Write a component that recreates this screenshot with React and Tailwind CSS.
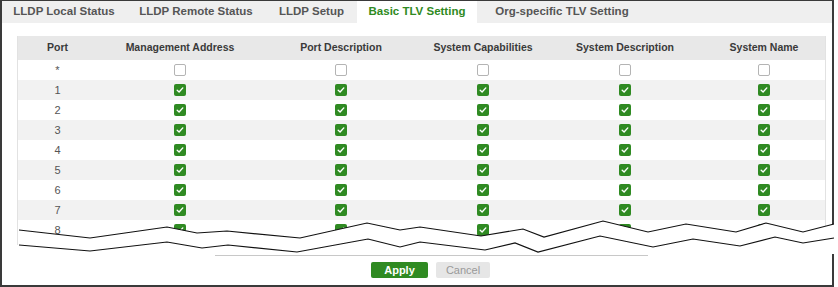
const tabs = [
  { label: "LLDP Local Status", w: "w-[124px]" },
  { label: "LLDP Remote Status", w: "w-[140px]" },
  { label: "LLDP Setup", w: "w-[91px]" },
  { label: "Basic TLV Setting", w: "w-[120px]", active: true },
  { label: "Org-specific TLV Setting", w: "w-[170px]" },
];

const cols = [
  "Port",
  "Management Address",
  "Port Description",
  "System Capabilities",
  "System Description",
  "System Name",
];

const ports = ["*", "1", "2", "3", "4", "5", "6", "7", "8"];

const topLine = [
  [19, 230], [90, 238], [167, 227], [197, 233], [227, 231], [300, 238],
  [367, 223], [400, 230], [420, 227], [481, 236], [523, 229], [544, 237],
  [603, 221], [648, 232], [686, 224], [736, 232], [766, 223], [803, 232], [834, 224],
];
const lowLine = [
  [19, 245], [90, 251], [167, 242], [202, 248], [228, 245], [297, 252],
  [368, 239], [400, 247], [420, 242], [485, 250], [515, 243], [538, 252],
  [600, 236], [653, 247], [693, 239], [740, 246], [775, 237], [803, 243], [834, 238],
];

const pts = (arr) => arr.map((p) => p.join(",")).join(" ");

function Box({ checked }) {
  if (!checked) {
    return <div className="h-3 w-3 rounded-[2px] border border-[#b4b4b4] bg-white" />;
  }
  return (
    <div className="flex h-3 w-3 items-center justify-center rounded-[2px] bg-[#2f8a22]">
      <svg width="8" height="8" viewBox="0 0 8 8">
        <path d="M1.2 4.3 L3.1 6 L6.8 1.9" fill="none" stroke="white" strokeWidth="1.4" strokeLinecap="round" strokeLinejoin="round" />
      </svg>
    </div>
  );
}

export default function App() {
  return (
    <div className="relative h-[287px] w-[838px] bg-white font-['Liberation_Sans',Arial,sans-serif]">
      <div className="h-[287px] w-[834px] border-x-2 border-b-2 border-t border-[#3a3a3a]">
        <div className="flex h-[22px] bg-[#efefef]">
          {tabs.map((t) => (
            <div
              key={t.label}
              className={`${t.w} flex items-center justify-center text-[11.5px] font-bold ${
                t.active ? "bg-white text-[#2f8a22]" : "text-[#555555]"
              }`}
            >
              {t.label}
            </div>
          ))}
        </div>

        <div className="px-[15px] pt-[13px]">
          <div className="h-[209px] w-[809px] overflow-hidden border-x border-[#e2e2e2]">
            <div className="grid h-[24px] grid-cols-[79px_166px_156px_128px_156px_122px] items-center bg-[#e8e8e8] text-[10.5px] font-bold text-[#3a3a3a]">
              {cols.map((c) => (
                <div key={c} className="text-center">{c}</div>
              ))}
            </div>
            {ports.map((p, i) => (
              <div
                key={p}
                className={`grid h-[20px] grid-cols-[79px_166px_156px_128px_156px_122px] items-center ${
                  i % 2 === 1 ? "bg-[#f2f2f2]" : "bg-white"
                }`}
              >
                <div className="text-center text-[11px] text-[#555555]">{p}</div>
                {[0, 1, 2, 3, 4].map((k) => (
                  <div key={k} className="flex justify-center">
                    <Box checked={p !== "*"} />
                  </div>
                ))}
              </div>
            ))}
          </div>

          <div className="ml-[198px] mt-[10px] h-px w-[433px] bg-[#c8c8c8]" />

          <div className="mt-[6px] flex gap-2 pl-[354px]">
            <button className="h-4 w-[57px] rounded-[2px] bg-[#2f8a22] text-[11px] font-bold text-white">
              Apply
            </button>
            <button className="h-4 w-[54px] rounded-[2px] bg-[#e6e6e6] text-[11px] text-[#999999]">
              Cancel
            </button>
          </div>
        </div>
      </div>

      <svg className="pointer-events-none absolute left-0 top-0" width="838" height="287" viewBox="0 0 838 287">
        <polygon points={`${pts(topLine)} 834,254 19,254`} fill="white" />
        <polyline points={pts(topLine)} fill="none" stroke="#111" strokeWidth="1.2" />
        <polyline points={pts(lowLine)} fill="none" stroke="#111" strokeWidth="1.2" />
      </svg>
    </div>
  );
}
